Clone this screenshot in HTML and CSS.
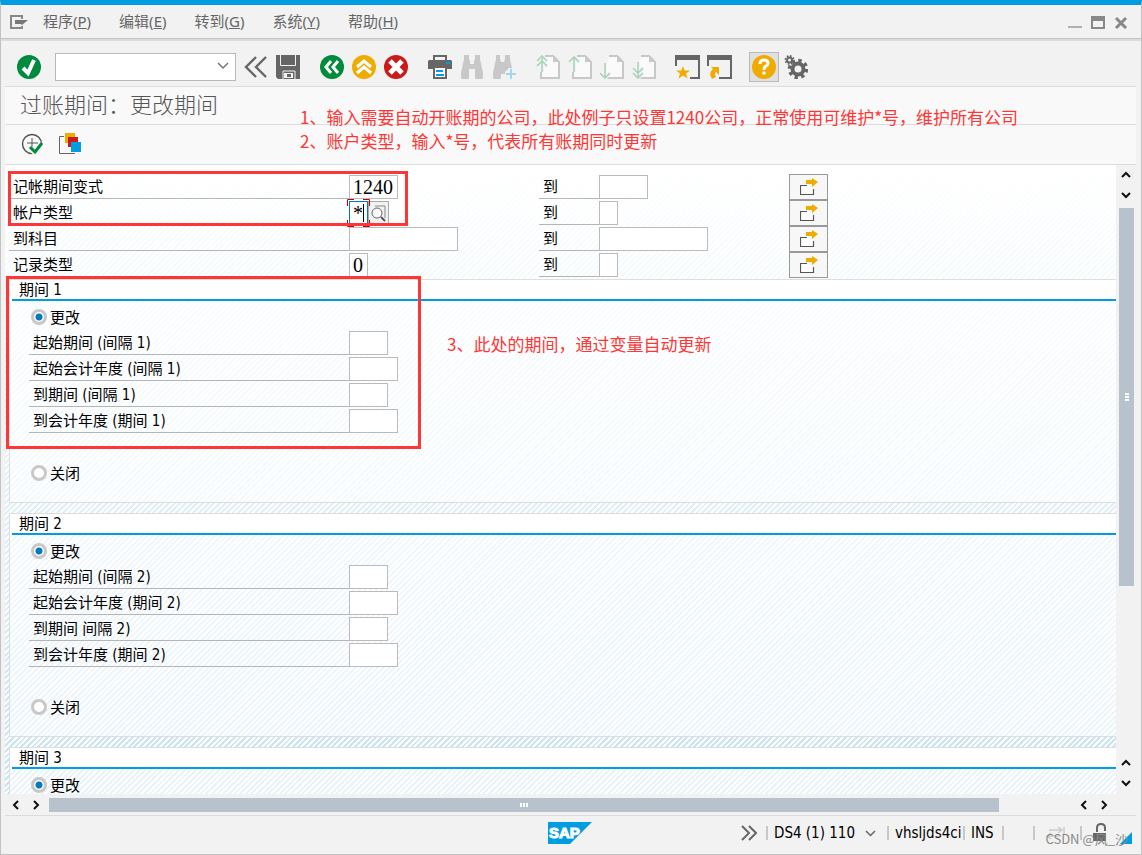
FILE: index.html
```html
<!DOCTYPE html>
<html lang="zh-CN">
<head>
    <meta charset="UTF-8">
    <meta name="viewport" content="width=device-width, initial-scale=1.0">
    <title>过账期间：更改期间</title>
    <link rel="stylesheet" href="styles.css">
</head>
<body>
    <!-- Shared icons -->
    <svg class="sprite" aria-hidden="true">
        <symbol id="page" viewBox="0 0 24 24">
            <path d="M9 1h8l6 6v16H5V12" fill="none" stroke="#c8c8c8" stroke-width="2"/>
            <path d="M9 2h8l5 5v15H6V12z" fill="#fafafa"/>
            <path d="M17 0l7 7h-7z" fill="#c8c8c8"/>
        </symbol>
        <symbol id="binoculars" viewBox="0 0 24 24">
            <path d="M4 0h5v4l1 2v3h4V6l1-2V0h5v4l3 14v5q0 1-1 1h-6q-1 0-1-1v-9h-6v9q0 1-1 1H2q-1 0-1-1v-5L4 4z" fill="#c8c8c8"/>
        </symbol>
        <symbol id="multi" viewBox="0 0 18 18">
            <path d="M7 7.500H.500v9h13V11" fill="#fff" stroke="#555" stroke-width="1.200"/>
            <path d="M6 2h6V0l6 4-6 5V6H6z" fill="#f0ab00"/>
        </symbol>
        <symbol id="arrow" viewBox="0 0 12 12">
            <path d="M2 8l4-4 4 4" fill="none" stroke="#111" stroke-width="2"/>
        </symbol>
    </svg>

    <div class="window">
        <!-- Menu Bar -->
        <nav class="menubar">
            <button class="sysmenu" aria-label="系统菜单">
                <svg width="18" height="14" viewBox="0 0 18 14"><path d="M12 4V1H1v12h11v-2" fill="none" stroke="#888" stroke-width="2"/><path d="M5 5h13l-6 5-1-1H5z" fill="#777"/></svg>
            </button>
            <a href="#" class="menu">程序(<u>P</u>)</a>
            <a href="#" class="menu">编辑(<u>E</u>)</a>
            <a href="#" class="menu">转到(<u>G</u>)</a>
            <a href="#" class="menu">系统(<u>Y</u>)</a>
            <a href="#" class="menu">帮助(<u>H</u>)</a>
            <div class="controls">
                <button aria-label="最小化"><svg width="14" height="14"><path d="M0 12h14" stroke="#b0b0b0" stroke-width="2"/></svg></button>
                <button aria-label="最大化"><svg width="14" height="14"><path d="M0 1h14v13H0zM2 6v6h10V6z" fill="#888" fill-rule="evenodd"/></svg></button>
                <button aria-label="关闭"><svg width="14" height="14"><path d="M2 3l10 10M12 3L2 13" stroke="#888" stroke-width="3"/></svg></button>
            </div>
        </nav>

        <!-- Toolbar -->
        <div class="toolbar">
            <div class="tools">
                <button aria-label="回车"><svg width="24" height="24"><circle cx="12" cy="12" r="12" fill="#008a3b"/><path d="M6 13l5 5 6-13" fill="none" stroke="#fff" stroke-width="4"/></svg></button>
                <div class="command">
                    <input type="text" aria-label="命令">
                    <button aria-label="历史"><svg width="12" height="8"><path d="M1 1l5 5 5-5" fill="none" stroke="#777" stroke-width="1.5"/></svg></button>
                </div>
                <button aria-label="隐藏命令"><svg width="24" height="24"><path d="M12 2L2 12l10 10M22 2L12 12l10 10" fill="none" stroke="#666" stroke-width="2.4"/></svg></button>
                <button aria-label="保存"><svg width="24" height="24"><path d="M0 0h24v24H2l-2-2z" fill="#666"/><path d="M4.500 0v10.500h15V0" fill="none" stroke="#f2f2f2"/><path d="M7 24v-8h12v8" fill="none" stroke="#f2f2f2"/><path d="M8 18h9v5H8z" fill="#f2f2f2"/><path d="M11 19h4v3h-4z" fill="#666"/></svg></button>
            </div>
            <div class="tools">
                <button aria-label="返回"><svg width="24" height="24"><circle cx="12" cy="12" r="12" fill="#008a3b"/><path d="M11 6l-5 6 5 6M18 6l-5 6 5 6" fill="none" stroke="#fff" stroke-width="3"/></svg></button>
                <button aria-label="退出"><svg width="24" height="24"><circle cx="12" cy="12" r="12" fill="#f0ab00"/><path d="M5 12l7-6 7 6M5 18l7-6 7 6" fill="none" stroke="#fff" stroke-width="3"/></svg></button>
                <button aria-label="取消"><svg width="24" height="24"><circle cx="12" cy="12" r="12" fill="#cc1919"/><path d="M6 6l12 12M18 6L6 18" stroke="#fff" stroke-width="5"/></svg></button>
            </div>
            <div class="tools">
                <button aria-label="打印"><svg width="24" height="24"><path d="M6 5V1h12v4" fill="none" stroke="#666" stroke-width="2"/><path d="M1 5h22l1 1v8H0V6z" fill="#666"/><path d="M18 7h4v2h-4z" fill="#009de0"/><path d="M6 12h12v11H6z" fill="#fff" stroke="#666" stroke-width="2"/><path d="M8 15h7v2H8zM8 19h8v2H8z" fill="#009de0"/></svg></button>
                <button aria-label="查找"><svg width="24" height="24"><use href="#binoculars"/></svg></button>
                <button aria-label="继续查找"><svg width="24" height="24"><path d="M4 0h4v4l1 3h3l1-3V0h5v4l2 9h-3l-4 4v2h-4v4q0 1-1 1H2q-1 0-1-1v-5L4 4z" fill="#c8c8c8"/><path d="M19 14v10M14 19h10" stroke="#a3d9f0" stroke-width="2"/></svg></button>
            </div>
            <div class="tools">
                <button aria-label="第一页"><svg width="24" height="24"><use href="#page"/><path d="M6 17V3M1 7l5-5 5 5M1 12l5-5 5 5" fill="none" stroke="#f2f2f2" stroke-width="4"/><path d="M6 17V3M1 6l5-5 5 5M1 11l5-5 5 5" fill="none" stroke="#a8d5ba" stroke-width="1.6"/></svg></button>
                <button aria-label="上一页"><svg width="24" height="24"><use href="#page"/><path d="M6 17V3M1 7l5-5 5 5" fill="none" stroke="#f2f2f2" stroke-width="4"/><path d="M6 17V2M1 7l5-5 5 5" fill="none" stroke="#a8d5ba" stroke-width="1.600"/></svg></button>
                <button aria-label="下一页"><svg width="24" height="24"><use href="#page"/><path d="M5 8v14M0 18l5 5 5-5" fill="none" stroke="#f2f2f2" stroke-width="4"/><path d="M5 8v14M0 18l5 5 5-5" fill="none" stroke="#a8d5ba" stroke-width="1.6"/></svg></button>
                <button aria-label="最后一页"><svg width="24" height="24"><use href="#page"/><path d="M6 7v15M1 18l5 5 5-5M1 13l5 5 5-5" fill="none" stroke="#f2f2f2" stroke-width="4"/><path d="M6 7v15M1 18l5 5 5-5M1 13l5 5 5-5" fill="none" stroke="#a8d5ba" stroke-width="1.6"/></svg></button>
            </div>
            <div class="tools">
                <button aria-label="新建会话"><svg width="26" height="24"><path d="M0 0h25v24H15v-2h8V5H2v6H0z" fill="#666"/><path d="M8 11l1.700 4.500H15l-4 3 1.500 5L8 20.500 3.500 23.500l1.500-5-4-3h5.300z" fill="#f0ab00"/></svg></button>
                <button aria-label="生成快捷方式"><svg width="26" height="24"><path d="M0 0h25v24H12v-2h11V5H2v6H0z" fill="#666"/><path d="M4 12h8v8l-3-3q-2 1 0 5l-4 2q-4-6 1-10z" fill="#f0ab00"/></svg></button>
            </div>
            <div class="tools">
                <button class="help" aria-label="帮助"><svg width="24" height="24"><circle cx="12" cy="12" r="12" fill="#f0ab00"/><path d="M8 9q0-4 4-4t4 3q0 2-2 3t-2 4" fill="none" stroke="#fff" stroke-width="3"/><circle cx="12" cy="18" r="1.800" fill="#fff"/></svg></button>
                <button aria-label="定制本地布局"><svg width="24" height="24"><circle cx="14" cy="14" r="5.500" fill="none" stroke="#666" stroke-width="4"/><circle cx="14" cy="14" r="8.500" fill="none" stroke="#666" stroke-width="3.500" stroke-dasharray="3.340 3.340"/><circle cx="5.500" cy="5" r="2.500" fill="none" stroke="#666" stroke-width="2"/><circle cx="5.500" cy="5" r="4" fill="none" stroke="#666" stroke-width="2" stroke-dasharray="1.570 1.570"/></svg></button>
            </div>
        </div>

        <!-- Title -->
        <header class="title">
            <h1>过账期间：更改期间</h1>
            <p class="note note-top">1、输入需要自动开账期的公司，此处例子只设置1240公司，正常使用可维护*号，维护所有公司<br>2、账户类型，输入*号，代表所有账期同时更新</p>
        </header>
        <div class="actions">
            <button aria-label="执行"><svg width="22" height="22"><circle cx="11" cy="11" r="9.500" fill="none" stroke="#555" stroke-width="1.500"/><path d="M11 5v12M6 10h11" stroke="#555"/><path d="M9 15l5 5 7-10" fill="none" stroke="#f9f9f9" stroke-width="5"/><path d="M9 14l5 5 7-9" fill="none" stroke="#008a3b" stroke-width="3"/></svg></button>
            <button aria-label="获取变式"><svg width="22" height="22"><path d="M5 3.500H.500v17H16" fill="none" stroke="#666"/><path d="M6 0h10v10H6z" fill="#f0ab00"/><path d="M9 4h10v10H9z" fill="#cc1919"/><path d="M12 9h10v10H12z" fill="#009de0"/></svg></button>
        </div>

        <!-- Selection Screen -->
        <main class="screen">
            <div class="content">
                <div class="selection">
                    <label for="var-from">记帐期间变式</label>
                    <div><input type="text" id="var-from" class="w4" value="1240"></div>
                    <label for="var-to">到</label>
                    <div><input type="text" id="var-to" class="w4"></div>
                    <button class="multi" aria-label="多项选择"><svg width="18" height="18"><use href="#multi"/></svg></button>

                    <label for="acc-from" class="plain">帐户类型</label>
                    <div class="active">
                        <input type="text" id="acc-from" class="w1" value="*">
                        <span class="caret"></span>
                        <svg class="focus" width="23" height="28"><path d="M.500 7V.500H7M16 .500h6.500V7M22.500 21v6.500H16M7 27.500H.500V21" fill="none" stroke="#c00"/></svg>
                        <button class="search" aria-label="搜索"><svg width="16" height="18"><path d="M4 2h10v12" fill="none" stroke="#888"/><circle cx="6" cy="9" r="5" fill="#fff" stroke="#666"/><path d="M10 13l4 4" stroke="#555" stroke-width="2"/></svg></button>
                    </div>
                    <label for="acc-to">到</label>
                    <div><input type="text" id="acc-to" class="w1"></div>
                    <button class="multi" aria-label="多项选择"><svg width="18" height="18"><use href="#multi"/></svg></button>

                    <label for="gl-from">到科目</label>
                    <div><input type="text" id="gl-from" class="w10"></div>
                    <label for="gl-to">到</label>
                    <div><input type="text" id="gl-to" class="w10"></div>
                    <button class="multi" aria-label="多项选择"><svg width="18" height="18"><use href="#multi"/></svg></button>

                    <label for="rec-from">记录类型</label>
                    <div><input type="text" id="rec-from" class="w1" value="0"></div>
                    <label for="rec-to">到</label>
                    <div><input type="text" id="rec-to" class="w1"></div>
                    <button class="multi" aria-label="多项选择"><svg width="18" height="18"><use href="#multi"/></svg></button>
                </div>

                <section class="group">
                    <h2>期间 1</h2>
                    <div class="fields">
                        <label class="radio"><input type="radio" name="p1" checked><span>更改</span></label>
                        <div class="field"><label for="p1-a">起始期间 (间隔 1)</label><input type="text" id="p1-a" class="w3"></div>
                        <div class="field"><label for="p1-b">起始会计年度 (间隔 1)</label><input type="text" id="p1-b" class="w4"></div>
                        <div class="field"><label for="p1-c">到期间 (间隔 1)</label><input type="text" id="p1-c" class="w3"></div>
                        <div class="field"><label for="p1-d">到会计年度 (期间 1)</label><input type="text" id="p1-d" class="w4"></div>
                        <label class="radio close"><input type="radio" name="p1"><span>关闭</span></label>
                    </div>
                </section>

                <section class="group">
                    <h2>期间 2</h2>
                    <div class="fields">
                        <label class="radio"><input type="radio" name="p2" checked><span>更改</span></label>
                        <div class="field"><label for="p2-a">起始期间 (间隔 2)</label><input type="text" id="p2-a" class="w3"></div>
                        <div class="field"><label for="p2-b">起始会计年度 (期间 2)</label><input type="text" id="p2-b" class="w4"></div>
                        <div class="field"><label for="p2-c">到期间 间隔 2)</label><input type="text" id="p2-c" class="w3"></div>
                        <div class="field"><label for="p2-d">到会计年度 (期间 2)</label><input type="text" id="p2-d" class="w4"></div>
                        <label class="radio close"><input type="radio" name="p2"><span>关闭</span></label>
                    </div>
                </section>

                <section class="group">
                    <h2>期间 3</h2>
                    <div class="fields">
                        <label class="radio"><input type="radio" name="p3" checked><span>更改</span></label>
                    </div>
                </section>

                <!-- Red marks -->
                <div class="mark mark-selection"></div>
                <div class="mark mark-period"></div>
                <p class="note note-period">3、此处的期间，通过变量自动更新</p>
            </div>

            <div class="vscroll">
                <button aria-label="向上"><svg width="12" height="12"><use href="#arrow"/></svg></button>
                <button aria-label="向下"><svg class="down" width="12" height="12"><use href="#arrow"/></svg></button>
                <div class="track"><div class="thumb" style="height: 69%"><span class="grip"></span></div></div>
                <button aria-label="向上"><svg width="12" height="12"><use href="#arrow"/></svg></button>
                <button aria-label="向下"><svg class="down" width="12" height="12"><use href="#arrow"/></svg></button>
            </div>
        </main>
        <div class="hscroll">
            <button aria-label="向左"><svg class="left" width="12" height="12"><use href="#arrow"/></svg></button>
            <button aria-label="向右"><svg class="right" width="12" height="12"><use href="#arrow"/></svg></button>
            <div class="track"><div class="thumb" style="width: 92.4%"><span class="grip"></span></div></div>
            <button aria-label="向左"><svg class="left" width="12" height="12"><use href="#arrow"/></svg></button>
            <button aria-label="向右"><svg class="right" width="12" height="12"><use href="#arrow"/></svg></button>
        </div>

        <!-- Status Bar -->
        <footer class="status">
            <svg class="logo" width="44" height="22" viewBox="0 0 44 22"><path d="M0 0h44L22 22H0z" fill="#009de0"/><text x="1" y="16" class="logo-text">SAP</text></svg>
            <button class="more" aria-label="展开"><svg width="16" height="16"><path d="M1 1l7 7-7 7M8 1l7 7-7 7" fill="none" stroke="#666" stroke-width="2"/></svg></button>
            <div class="cell system">DS4 (1) 110 <svg width="11" height="7"><path d="M1 1l4.500 4.500L10 1" fill="none" stroke="#666" stroke-width="1.500"/></svg></div>
            <div class="cell server">vhsljds4ci</div>
            <div class="cell mode">INS</div>
            <div class="cell blank"></div>
            <div class="cell transfer"><svg width="20" height="12"><path d="M3 3h12M12 0l4 3-4 3M18 0v7M2 9h13M5 6L1 9l4 3" fill="none" stroke="#ccc" stroke-width="1.500"/></svg></div>
            <div class="cell lock"><svg width="18" height="20"><path d="M5 9V5q0-4 4-4t4 4v3" fill="none" stroke="#666" stroke-width="2"/><path d="M1 10h13v8H1z" fill="#666"/></svg></div>
            <svg class="corner" width="12" height="12"><path d="M12 0v12H0z" fill="#009de0"/></svg>
            <span class="watermark">CSDN @风_沙</span>
        </footer>
    </div>
</body>
</html>
```
FILE: styles.css
```css
/* General Styles */
* {
    box-sizing: border-box;
}
body {
    margin: 0;
    font-family: "DejaVu Sans Condensed", "Noto Sans CJK SC", sans-serif;
    font-size: 15px;
    color: #000;
}
button {
    display: flex;
    align-items: center;
    justify-content: center;
    padding: 0;
    border: none;
    background: none;
}
input {
    margin: 0;
}
svg {
    display: block;
    flex: none;
}
.sprite {
    position: absolute;
    width: 0;
    height: 0;
}
.window {
    display: flex;
    flex-direction: column;
    height: 100vh;
    border: 1px solid #c2c2c2;
    border-top: 5px solid #009de0;
    background-color: #f2f2f2;
}

/* Menu Bar */
.menubar {
    display: flex;
    align-items: center;
    height: 36px;
    padding: 0 13px 1px 9px;
    border-bottom: 1px solid #dcdcdc;
    box-shadow: inset 0 -1px #dcdcdc, inset 0 -2px #c2c2c2;
    gap: 28px;
    font-family: "Noto Sans", "Noto Sans CJK SC", sans-serif;
}
.sysmenu {
    margin-right: -13px;
}
.menu {
    padding-bottom: 4px;
    color: #666;
    text-decoration: none;
    white-space: nowrap;
}
.controls {
    display: flex;
    gap: 9px;
    margin-left: auto;
}

/* Toolbar */
.toolbar {
    display: flex;
    align-items: center;
    gap: 20px;
    height: 46px;
    margin: 0 5px 0 4px;
    padding: 6px 16px 0 12px;
    border-bottom: 1px solid #dcdcdc;
}
.tools {
    display: flex;
    align-items: center;
    gap: 8px;
}
.tools button {
    width: 24px;
    height: 24px;
}
.command {
    display: flex;
    width: 181px;
    height: 28px;
    margin-left: 6px;
    border: 1px solid #b8b8b8;
    background-color: #fff;
}
.command input {
    flex: 1;
    min-width: 0;
    border: none;
    outline: none;
}
.tools .command button {
    height: 24px;
}
.tools .help {
    width: 30px;
    height: 30px;
    margin: 0 -3px;
    border: 1px solid #bbb;
    background-color: #e0e0e0;
}

/* Title */
.title {
    position: relative;
    height: 38px;
    margin: 0 5px 0 4px;
    padding-left: 15px;
    border-bottom: 1px solid #dcdcdc;
    background-color: #f9f9f9;
}
h1 {
    margin: 0;
    font-family: "Noto Sans CJK SC", sans-serif;
    font-size: 22px;
    font-weight: 300;
    line-height: 32px;
    color: #555;
}
.actions {
    display: flex;
    align-items: center;
    gap: 16px;
    height: 40px;
    margin: 0 5px 0 4px;
    padding: 0 0 2px 16px;
    border-bottom: 1px solid #dcdcdc;
    background-color: #f9f9f9;
}

/* Annotations */
.note {
    position: absolute;
    margin: 0;
    font-family: "Noto Sans CJK SC", sans-serif;
    font-size: 17px;
    line-height: 24px;
    color: #ff3636;
    white-space: nowrap;
}
.note-top {
    top: 18px;
    left: 295px;
    z-index: 1;
}
.note-period {
    top: 167px;
    left: 442px;
}
.mark {
    position: absolute;
    border: 3px solid #ff3636;
}
.mark-selection {
    top: 6px;
    left: 3px;
    width: 400px;
    height: 55px;
}
.mark-period {
    top: 111px;
    left: 1px;
    width: 415px;
    height: 173px;
}

/* Selection Screen */
.screen {
    display: flex;
    flex: 1;
    min-height: 0;
    margin: 0 5px 0 4px;
}
.content {
    position: relative;
    flex: 1;
    overflow: hidden;
    padding: 10px 0 0 4px;
    background: linear-gradient(#fff, rgba(255, 255, 255, 0)), repeating-linear-gradient(135deg, #fff 0, #fff 2px, #c5e3f3 2px, #c5e3f3 4px);
}
.selection {
    display: grid;
    grid-template-columns: 340px 190px 60px 190px 39px;
    grid-auto-rows: 24px;
    row-gap: 2px;
    margin-bottom: 2px;
}
.selection > div {
    display: flex;
}
.selection label,
.field label {
    height: 24px;
    padding-left: 4px;
    border-bottom: 1px solid #b5b5b5;
    line-height: 25px;
    white-space: nowrap;
}
.selection .plain {
    border-color: transparent;
}
.content input[type="text"] {
    height: 24px;
    padding: 0 3px;
    border: 1px solid #bbb;
    background-color: #fff;
    font-family: "Liberation Serif", serif;
    font-size: 20px;
    outline: none;
}
.content .w1 {
    width: 19px;
}
.content .w3 {
    width: 39px;
}
.content .w4 {
    width: 49px;
}
.content .w10 {
    width: 109px;
}
.multi {
    height: 26px;
    margin-top: -1px;
    border: 1px solid #999;
    background-color: #f7f7f7;
}
.active {
    position: relative;
}
.active input[type="text"] {
    border-color: #0079b8;
}
.caret {
    position: absolute;
    top: 3px;
    left: 14px;
    width: 1px;
    height: 18px;
    background-color: #000;
}
.focus {
    position: absolute;
    top: -2px;
    left: -2px;
}
.search {
    width: 21px;
    border: 1px solid #aaa;
    background-color: #f2f2f2;
}

/* Period Groups */
.group {
    height: 224px;
    margin-bottom: 10px;
    border: 1px solid #dedede;
    border-right: none;
    background-color: rgba(255, 255, 255, 0.6);
}
h2 {
    height: 21px;
    margin: 0;
    padding-left: 9px;
    background: linear-gradient(#009de0, #009de0) 2px 100% / 100% 2px no-repeat #fff;
    font-size: 15px;
    font-weight: normal;
    line-height: 20px;
}
.fields {
    display: flex;
    flex-direction: column;
    gap: 2px;
    padding: 4px 0 0 19px;
}
.field {
    display: flex;
    height: 24px;
}
.field label {
    width: 320px;
}
.radio {
    display: flex;
    align-items: center;
    gap: 3px;
    height: 24px;
    padding-left: 2px;
}
.radio span {
    padding-bottom: 2px;
}
.radio input {
    appearance: none;
    width: 16px;
    height: 16px;
    border: 3px solid #c8c8c8;
    border-radius: 50%;
    background-color: #fff;
}
.radio input:checked {
    background: radial-gradient(circle, #0079bf 3px, #fff 4px);
}
.close {
    margin-top: 26px;
}

/* Scroll Bars */
.vscroll {
    display: flex;
    flex-direction: column;
    width: 20px;
    padding-bottom: 1px;
}
.vscroll button {
    height: 20px;
}
.track {
    flex: 1;
}
.thumb {
    display: flex;
    align-items: center;
    justify-content: center;
    background-color: #b8c2cc;
}
.vscroll .thumb {
    width: 15px;
    margin: 3px 0 0 3px;
}
.hscroll {
    display: flex;
    align-items: center;
    height: 22px;
    margin: 0 5px 0 4px;
    padding: 0 22px 0 1px;
    border-bottom: 1px solid #dcdcdc;
}
.hscroll button {
    width: 20px;
    height: 20px;
}
.hscroll .thumb {
    height: 14px;
    margin-left: 3px;
}
.grip {
    width: 8px;
    height: 4px;
    background: repeating-linear-gradient(90deg, #fff 0, #fff 2px, transparent 2px, transparent 3px);
}
.vscroll .grip {
    width: 4px;
    height: 8px;
    background: repeating-linear-gradient(#fff 0, #fff 2px, transparent 2px, transparent 3px);
}
.down {
    transform: rotate(180deg);
}
.left {
    transform: rotate(-90deg);
}
.right {
    transform: rotate(90deg);
}

/* Status Bar */
.status {
    position: relative;
    display: flex;
    align-items: center;
    justify-content: flex-end;
    height: 38px;
    padding: 0 9px 4px 0;
}
.logo {
    margin-right: 149px;
}
.logo-text {
    font-family: "Liberation Sans", sans-serif;
    font-size: 15px;
    font-weight: bold;
    fill: #fff;
    stroke: #fff;
}
.more {
    margin-right: 9px;
}
.cell {
    display: flex;
    align-items: center;
    height: 14px;
    padding-left: 6px;
    border-left: 2px solid #c8c8c8;
    white-space: nowrap;
}
.system {
    gap: 10px;
    width: 121px;
}
.server {
    width: 76px;
}
.mode {
    width: 39px;
}
.blank {
    width: 31px;
}
.transfer {
    width: 47px;
    padding-left: 11px;
}
.lock {
    width: 40px;
    padding-left: 10px;
}
.corner {
    margin-top: 10px;
}
.watermark {
    position: absolute;
    right: 13px;
    bottom: 5px;
    font-family: "Noto Sans CJK SC", sans-serif;
    font-size: 13px;
    line-height: 20px;
    color: #888;
}
```
